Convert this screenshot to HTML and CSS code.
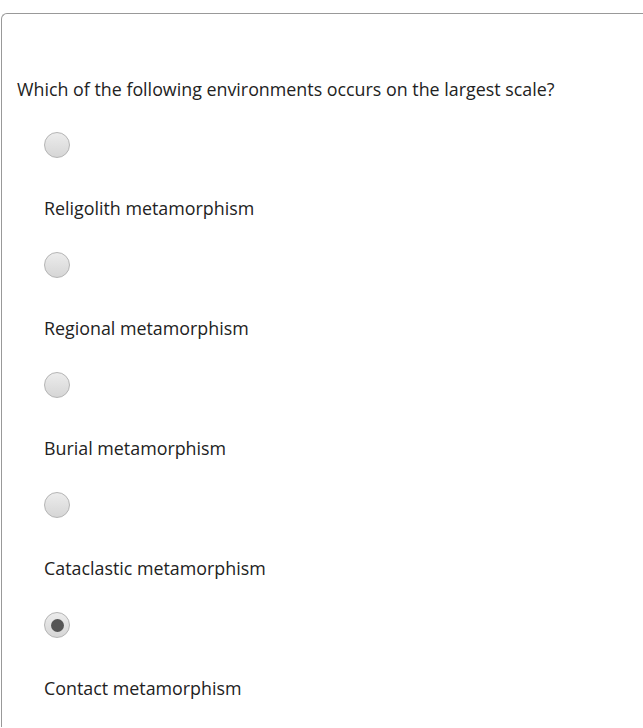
FILE: index.html
```html
<!DOCTYPE html>
<html>
<head>
<meta charset="utf-8">
<link rel="stylesheet" href="styles.css">
</head>
<body>
<div class="card">
  <p class="question">Which of the following environments occurs on the largest scale?</p>
  <div class="options">
    <div class="option"><span class="radio"></span><span class="label">Religolith metamorphism</span></div>
    <div class="option"><span class="radio"></span><span class="label">Regional metamorphism</span></div>
    <div class="option"><span class="radio"></span><span class="label">Burial metamorphism</span></div>
    <div class="option"><span class="radio"></span><span class="label">Cataclastic metamorphism</span></div>
    <div class="option"><span class="radio checked"></span><span class="label">Contact metamorphism</span></div>
  </div>
</div>
</body>
</html>
```
FILE: styles.css
```css
html, body {
  margin: 0;
  padding: 0;
  background: #fff;
  overflow: hidden;
}
body {
  font-family: "Open Sans", sans-serif;
  color: #222;
}
.card {
  margin: 13px 0 0 1px;
  border: 1px solid #999;
  border-right: none;
  border-bottom: none;
  border-top-left-radius: 6px;
  height: 714px;
  padding: 0 0 0 15px;
  box-sizing: border-box;
}
.question {
  margin: 0;
  padding-top: 63px;
  font-size: 17.85px;
  line-height: 24px;
  color: #222;
}
.options {
  display: flex;
  flex-direction: column;
  padding-left: 27px;
  padding-top: 31px;
}
.option {
  display: flex;
  flex-direction: column;
  align-items: flex-start;
  height: 120px;
}
.option:last-child {
  height: auto;
}
.radio {
  width: 24px;
  height: 24px;
  border: 1px solid #b4b4b4;
  border-radius: 50%;
  background: linear-gradient(#ececec, #d6d6d6);
  box-sizing: content-box;
  display: flex;
  align-items: center;
  justify-content: center;
}
.radio.checked::after {
  content: "";
  width: 13px;
  height: 13px;
  border-radius: 50%;
  background: #555;
}
.label {
  margin-top: 38px;
  font-size: 17.85px;
  line-height: 24px;
}
```
